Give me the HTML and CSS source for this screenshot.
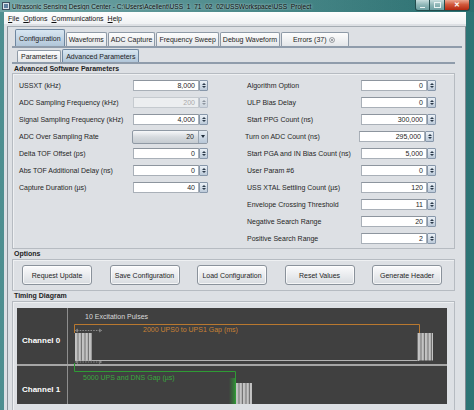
FILE: index.html
```html
<!DOCTYPE html>
<html lang="en">
<head>
    <meta charset="UTF-8">
    <title>Ultrasonic Sensing Design Center</title>
    <link rel="stylesheet" href="styles.css">
</head>
<body>
    <div class="window">
        <div class="titlebar">
            <svg class="app-icon" viewBox="0 0 8 8">
                <rect x="0.5" y="0.5" width="7" height="7" fill="#d9e1ea" stroke="#3d4d5e"/>
                <rect x="2" y="2" width="4" height="4" fill="#5f7f9f"/>
            </svg>
            <span class="title">Ultrasonic Sensing Design Center - C:\Users\Acellent\USS_1_71_02_02\USSWorkspace\USS_Project</span>
            <div class="controls">
                <span class="ctl min"></span>
                <span class="ctl max"></span>
                <span class="ctl close">✕</span>
            </div>
        </div>

        <div class="frame">
            <div class="menubar">
                <span><u>F</u>ile</span>
                <span><u>O</u>ptions</span>
                <span><u>C</u>ommunications</span>
                <span><u>H</u>elp</span>
            </div>

            <div class="client">
                <!-- main tabs -->
                <div class="tabs">
                    <span class="tab active">Configuration</span>
                    <span class="tab">Waveforms</span>
                    <span class="tab">ADC Capture</span>
                    <span class="tab">Frequency Sweep</span>
                    <span class="tab">Debug Waveform</span>
                    <span class="tab closable">Errors (37)
                        <svg class="tab-close" viewBox="0 0 6 6">
                            <circle cx="3" cy="3" r="2.5" fill="none" stroke="#7a7f85" stroke-width="0.7"/>
                            <path d="M1.8 1.8 L4.2 4.2 M4.2 1.8 L1.8 4.2" stroke="#7a7f85" stroke-width="0.7"/>
                        </svg>
                    </span>
                </div>

                <div class="tabpane">
                    <div class="tabs sub">
                        <span class="tab">Parameters</span>
                        <span class="tab active">Advanced Parameters</span>
                    </div>

                    <div class="subpane">
                        <div class="group-title">Advanced Software Parameters</div>
                        <div class="group params">
                            <div class="col">
                                <div class="row"><label>USSXT (kHz)</label><span class="field">8,000</span><span class="spin"></span></div>
                                <div class="row"><label>ADC Sampling Frequency (kHz)</label><span class="field disabled">200</span><span class="spin disabled"></span></div>
                                <div class="row"><label>Signal Sampling Frequency (kHz)</label><span class="field">4,000</span><span class="spin"></span></div>
                                <div class="row">
                                    <label>ADC Over Sampling Rate</label>
                                    <span class="combo"><span class="combo-value">20</span><span class="combo-arrow"></span></span>
                                </div>
                                <div class="row"><label>Delta TOF Offset (ps)</label><span class="field">0</span><span class="spin"></span></div>
                                <div class="row"><label>Abs TOF Additional Delay (ns)</label><span class="field">0</span><span class="spin"></span></div>
                                <div class="row"><label>Capture Duration (µs)</label><span class="field">40</span><span class="spin"></span></div>
                            </div>
                            <div class="col">
                                <div class="row"><label>Algorithm Option</label><span class="field">0</span><span class="spin"></span></div>
                                <div class="row"><label>ULP Bias Delay</label><span class="field">0</span><span class="spin"></span></div>
                                <div class="row"><label>Start PPG Count (ns)</label><span class="field">300,000</span><span class="spin"></span></div>
                                <div class="row shifted"><label>Turn on ADC Count (ns)</label><span class="field">295,000</span><span class="spin"></span></div>
                                <div class="row"><label>Start PGA and IN Bias Count (ns)</label><span class="field">5,000</span><span class="spin"></span></div>
                                <div class="row"><label>User Param #6</label><span class="field">0</span><span class="spin"></span></div>
                                <div class="row"><label>USS XTAL Settling Count (µs)</label><span class="field">120</span><span class="spin"></span></div>
                                <div class="row"><label>Envelope Crossing Threshold</label><span class="field">11</span><span class="spin"></span></div>
                                <div class="row"><label>Negative Search Range</label><span class="field">20</span><span class="spin"></span></div>
                                <div class="row"><label>Positive Search Range</label><span class="field">2</span><span class="spin"></span></div>
                            </div>
                        </div>

                        <div class="group-title tall">Options</div>
                        <div class="group options">
                            <button class="btn">Request Update</button>
                            <button class="btn">Save Configuration</button>
                            <button class="btn">Load Configuration</button>
                            <button class="btn">Reset Values</button>
                            <button class="btn">Generate Header</button>
                        </div>

                        <div class="group-title tall">Timing Diagram</div>
                        <div class="group timing">
                            <div class="diagram">
                                <div class="channel first">
                                    <div class="ch-label">Channel 0</div>
                                    <div class="ch-track"></div>
                                </div>
                                <div class="channel">
                                    <div class="ch-label">Channel 1</div>
                                    <div class="ch-track"></div>
                                </div>

                                <!-- waveform drawing lies over both channel tracks -->
                                <svg class="waves" viewBox="0 0 380 96">
                                    <defs>
                                        <pattern id="stripes" width="3.5" height="10" patternUnits="userSpaceOnUse">
                                            <rect width="3.5" height="10" fill="#707070"/>
                                            <rect width="2.4" height="10" fill="#c4c4c4"/>
                                        </pattern>
                                        <linearGradient id="greenFade" x1="0" x2="1" y1="0" y2="0">
                                            <stop offset="0" stop-color="#2f9b35" stop-opacity="0"/>
                                            <stop offset="1" stop-color="#2f9b35" stop-opacity="0.9"/>
                                        </linearGradient>
                                    </defs>

                                    <text x="17" y="10.5" class="lbl-white">10 Excitation Pulses</text>

                                    <!-- channel 0 -->
                                    <path d="M6.5 25 V16.5 H351.5 V52" fill="none" stroke="#b9782f" stroke-width="1"/>
                                    <text x="75" y="24" class="lbl-orange">2000 UPS0 to UPS1 Gap (ms)</text>
                                    <line x1="7" y1="52.5" x2="351" y2="52.5" stroke="#b4b4b4" stroke-width="1"/>
                                    <rect x="7" y="25" width="17" height="27.5" fill="url(#stripes)"/>
                                    <line x1="9" y1="22.5" x2="32" y2="22.5" stroke="#bdbdbd" stroke-width="0.6" stroke-dasharray="1.5 1.2"/>
                                    <path d="M10 21 L7.5 22.5 L10 24 M31 21 L33.5 22.5 L31 24" fill="none" stroke="#bdbdbd" stroke-width="0.6"/>
                                    <line x1="9" y1="54" x2="32" y2="54" stroke="#bdbdbd" stroke-width="0.6" stroke-dasharray="1.5 1.2"/>
                                    <path d="M10 52.5 L7.5 54 L10 55.5 M31 52.5 L33.5 54 L31 55.5" fill="none" stroke="#bdbdbd" stroke-width="0.6"/>
                                    <rect x="349" y="25" width="16" height="27.5" fill="url(#stripes)"/>

                                    <!-- channel 1 -->
                                    <path d="M6.5 55 V63.5 H167.5 V96" fill="none" stroke="#2f9b35" stroke-width="1"/>
                                    <text x="15" y="71.5" class="lbl-green">5000 UPS and DNS Gap (µs)</text>
                                    <rect x="161" y="70" width="7" height="26" fill="url(#greenFade)"/>
                                    <rect x="168" y="75" width="16" height="21" fill="url(#stripes)"/>
                                </svg>
                            </div>
                        </div>
                    </div>
                </div>
            </div>
        </div>
    </div>
</body>
</html>
```

FILE: styles.css
```css
* {
    margin: 0;
    padding: 0;
    box-sizing: border-box;
}

body {
    width: 474px;
    height: 410px;
    overflow: hidden;
    font-family: "Liberation Sans", Arial, sans-serif;
    font-size: 7px;
    color: #1e1e1e;
}

.window {
    width: 474px;
    height: 410px;
    display: flex;
    flex-direction: column;
    background: linear-gradient(90deg, #4f8f90 0%, #3d8081 55%, #2d7475 100%);
}

/* title bar */

.titlebar {
    height: 12px;
    display: flex;
    align-items: center;
    padding-left: 2px;
    background: linear-gradient(90deg, rgba(255, 255, 255, 0.2), rgba(255, 255, 255, 0.06) 60%, rgba(0, 0, 0, 0.04));
}

.app-icon {
    width: 8px;
    height: 8px;
    margin-right: 2px;
    flex-shrink: 0;
}

.title {
    flex: 1;
    white-space: nowrap;
    overflow: hidden;
    font-size: 6.6px;
    color: #101010;
    text-shadow: 0 0 3px rgba(255, 255, 255, 0.85);
}

.controls {
    display: flex;
    align-self: flex-start;
    margin-right: 4px;
}

.ctl {
    height: 11px;
    border: 1px solid #234c4d;
    border-top: none;
    background: linear-gradient(#c6dddd, #8db5b6 50%, #6c9fa1);
    display: flex;
    align-items: center;
    justify-content: center;
}

.ctl.min {
    width: 15px;
    border-radius: 0 0 0 3px;
}

.ctl.min::after {
    content: "";
    width: 5px;
    height: 1px;
    margin-top: 4px;
    background: #e9f3f3;
}

.ctl.max {
    width: 15px;
    border-left: none;
}

.ctl.max::after {
    content: "";
    width: 5px;
    height: 4px;
    border: 1px solid #e9f3f3;
}

.ctl.close {
    width: 25px;
    border-left: none;
    border-radius: 0 0 3px 0;
    background: linear-gradient(#eba690, #d2593c 45%, #b4270f);
    color: #fff;
    font-size: 7px;
    font-weight: bold;
}

/* window frame */

.frame {
    flex: 1;
    min-height: 0;
    margin: 0 8px 0 4px;
    background: #dde0e4;
    display: flex;
    flex-direction: column;
}

.menubar {
    height: 12px;
    display: flex;
    align-items: center;
    gap: 4px;
    padding-left: 4px;
    background: linear-gradient(#fefefe, #eff1f3);
    color: #111;
}

.client {
    flex: 1;
    min-height: 0;
    overflow: hidden;
    margin: 2px 0 0 3px;
    border-top: 1px solid #a5acb3;
    border-left: 1px solid #8c939a;
    border-right: 1px solid #7f8890;
    padding: 2px 3px 0 4px;
}

/* tabs */

.tabs {
    display: flex;
    align-items: flex-end;
    gap: 0;
    height: 17px;
    padding-left: 3px;
}

.tab {
    display: flex;
    align-items: center;
    height: 14px;
    padding: 0 2px;
    margin-right: 1px;
    white-space: nowrap;
    border: 1px solid #8e9aa7;
    border-bottom: none;
    border-radius: 2px 2px 0 0;
    background: linear-gradient(#fdfdfd, #e3e6e9);
}

.tab.active {
    height: 17px;
    padding: 0 3px;
    border-color: #6f87a0;
    background: linear-gradient(#d8e6f1, #b1c6d9);
}

.tab.closable {
    padding: 0 13px 0 11px;
}

.tab-close {
    width: 6px;
    height: 6px;
    margin-left: 2px;
}

.tabpane {
    border-top: 2px solid #8f9cab;
    padding-top: 1px;
}

.tabs.sub {
    height: 13px;
    padding-left: 5px;
}

.tabs.sub .tab {
    height: 12px;
    padding: 0 3px;
}

.tabs.sub .tab.active {
    height: 13px;
}

.subpane {
    border-top: 2px solid #8f9cab;
    margin-right: 7px;
}

/* groups */

.group-title {
    height: 9px;
    line-height: 9px;
    padding-left: 2px;
    font-weight: bold;
}

.group-title.tall {
    height: 10px;
    line-height: 10px;
}

.group {
    border: 1px solid #b6bbc1;
    box-shadow: inset 1px 1px 0 #eef0f2;
}

.params {
    display: flex;
    gap: 39px;
    padding: 3px 6px 1px;
}

.col {
    width: 189px;
}

.row {
    display: flex;
    align-items: center;
    height: 17px;
}

.row label {
    width: 114px;
    white-space: nowrap;
    color: #262626;
}

.row.shifted {
    margin-left: -2px;
}

.field {
    width: 66px;
    height: 11px;
    line-height: 9px;
    padding-right: 3px;
    text-align: right;
    background: #fff;
    border: 1px solid #a9b0b8;
    border-top-color: #8d959e;
}

.field.disabled {
    background: #eceef0;
    border-color: #c5cacf;
    color: #a9a9a9;
}

.spin {
    width: 9px;
    height: 11px;
    display: flex;
    flex-direction: column;
    align-items: center;
    justify-content: center;
    gap: 1px;
    border: 1px solid #8797aa;
    border-radius: 1px;
    background: linear-gradient(#eaf0f6, #bccad9);
}

.spin::before,
.spin::after {
    content: "";
    width: 0;
    height: 0;
    border-left: 2px solid transparent;
    border-right: 2px solid transparent;
}

.spin::before {
    border-bottom: 2px solid #2b3a4a;
}

.spin::after {
    border-top: 2px solid #2b3a4a;
}

.spin.disabled {
    opacity: 0.45;
}

.combo {
    display: flex;
    width: 76px;
    height: 14px;
    margin-left: -1px;
    border: 1px solid #8f99a4;
    border-radius: 2px;
    background: linear-gradient(#f7f8f9, #d6dade 50%, #c5cbd1);
}

.combo-value {
    flex: 1;
    text-align: right;
    padding-right: 4px;
    line-height: 12px;
}

.combo-arrow {
    width: 9px;
    display: flex;
    align-items: center;
    justify-content: center;
    border-left: 1px solid #9aa6b3;
    background: linear-gradient(#e5ecf3, #b8c7d7);
}

.combo-arrow::after {
    content: "";
    border-left: 2px solid transparent;
    border-right: 2px solid transparent;
    border-top: 3px solid #1f2d3b;
}

/* options */

.options {
    display: flex;
    gap: 17.5px;
    padding: 5px 9px;
}

.btn {
    width: 70px;
    height: 20px;
    font: inherit;
    color: #1e1e1e;
    border: 1px solid #8a929b;
    border-radius: 3px;
    background: linear-gradient(#fbfbfc, #eaecef 50%, #d8dce0);
    box-shadow: inset 0 0 0 1px rgba(255, 255, 255, 0.7);
}

/* timing diagram */

.timing {
    padding: 6px 7px 0 4px;
    height: 120px;
}

.diagram {
    position: relative;
    height: 96px;
    background: #404040;
    display: flex;
    flex-direction: column;
}

.channel {
    display: flex;
    flex: 1;
}

.channel.first {
    flex: none;
    height: 58px;
    border-bottom: 2px solid #a6a6a6;
}

.ch-label {
    width: 51px;
    display: flex;
    align-items: center;
    padding-left: 5px;
    padding-top: 8px;
    border-right: 1px solid #8e8e8e;
    color: #fff;
    font-size: 8px;
    font-weight: bold;
}

.ch-track {
    flex: 1;
}

.waves {
    position: absolute;
    left: 51px;
    top: 0;
    width: 380px;
    height: 96px;
}

.waves text {
    font-family: "Liberation Sans", Arial, sans-serif;
    font-size: 7px;
}

.lbl-white {
    fill: #dadada;
}

.lbl-orange {
    fill: #c98235;
}

.lbl-green {
    fill: #3aa63f;
}
```
